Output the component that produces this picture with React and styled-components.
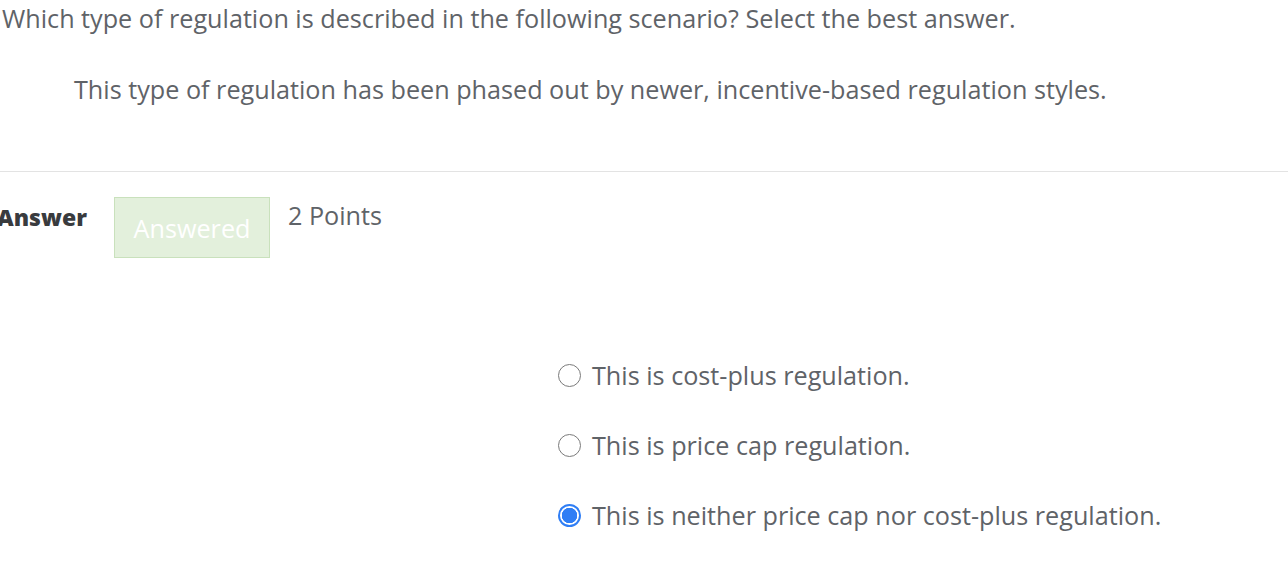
import React from 'react';
import styled, { createGlobalStyle } from 'styled-components';

const GlobalStyle = createGlobalStyle`
  body {
    margin: 0;
    background: #fff;
    font-family: "Open Sans", "Liberation Sans", sans-serif;
    overflow: hidden;
  }
`;

const Page = styled.div`
  width: 1288px;
  height: 584px;
  overflow: hidden;
`;

const Question = styled.div`
  margin-left: 2px;
  font-size: 25.2px;
  line-height: 36px;
  color: #5f6368;
`;

const Scenario = styled.p`
  margin: 35px 0 0 74px;
  font-size: 25.2px;
  line-height: 36px;
  color: #5f6368;
`;

const Divider = styled.hr`
  margin: 64px 0 0;
  border: none;
  border-top: 1px solid #e3e3e3;
`;

const AnswerRow = styled.div`
  display: flex;
  align-items: flex-start;
  margin-top: 25px;
  margin-left: -3px;
`;

const AnswerLabel = styled.span`
  font-size: 23px;
  font-weight: 800;
  line-height: 40px;
  color: #393b3e;
  width: 117px;
`;

const Badge = styled.span`
  box-sizing: border-box;
  width: 156px;
  height: 61px;
  padding-top: 12px;
  text-align: center;
  background: #e3f0dc;
  border: 1px solid #c9e1bc;
  color: #fff;
  font-size: 25.2px;
  line-height: 36px;
`;

const Points = styled.span`
  margin-left: 18px;
  font-size: 25.2px;
  line-height: 37px;
  color: #5f6368;
`;

const Options = styled.div`
  display: flex;
  flex-direction: column;
  gap: 34px;
  margin: 99px 0 0 558px;
`;

const Option = styled.label`
  display: flex;
  align-items: center;
  gap: 11px;
  font-size: 25.2px;
  line-height: 36px;
  color: #5f6368;
`;

const Radio = styled.span`
  box-sizing: border-box;
  width: 23px;
  height: 23px;
  border-radius: 50%;
  flex: none;
  border: ${p => (p.checked ? '2px solid #2f7ef5' : '1.5px solid #7a7a7a')};
  background: ${p => (p.checked ? 'radial-gradient(circle, #2f7ef5 0 7.5px, #fff 8px)' : '#fff')};
`;

const options = [
  { text: 'This is cost-plus regulation.', checked: false },
  { text: 'This is price cap regulation.', checked: false },
  { text: 'This is neither price cap nor cost-plus regulation.', checked: true },
];

const App = () => (
  <Page>
    <GlobalStyle />
    <Question>
      Which type of regulation is described in the following scenario? Select the best answer.
    </Question>
    <Scenario>
      This type of regulation has been phased out by newer, incentive-based regulation styles.
    </Scenario>
    <Divider />
    <AnswerRow>
      <AnswerLabel>Answer</AnswerLabel>
      <Badge>Answered</Badge>
      <Points>2 Points</Points>
    </AnswerRow>
    <Options>
      {options.map(o => (
        <Option key={o.text}>
          <Radio checked={o.checked} />
          {o.text}
        </Option>
      ))}
    </Options>
  </Page>
);

export default App;
